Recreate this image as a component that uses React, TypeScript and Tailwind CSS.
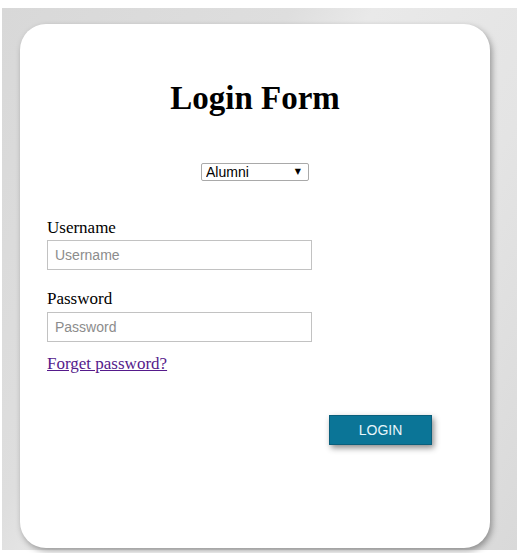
import React, { useState } from "react";

const App: React.FC = () => {
  const [role, setRole] = useState("Alumni");

  return (
    <div className="w-[521px] h-[553px] bg-white pt-[8px] pl-[2px]">
      <div className="w-[515px] h-[542px] pt-[16px] pl-[18px] bg-[linear-gradient(120deg,#d8d8d8_0%,#dedede_35%,#e9e9e9_45%,#e4e4e4_70%,#d9d9d9_100%)]">
        <div className="w-[470px] h-[524px] rounded-[26px] bg-white shadow-[2px_3px_6px_rgba(0,0,0,0.35)] pt-[54px] px-[27px] font-['Liberation_Serif',serif] text-black">
          <h1 className="text-center text-[33px] font-bold leading-[40px]">Login Form</h1>

          <div className="flex justify-center mt-[45px]">
            <div className="relative w-[108px] h-[18px]">
              <select
                value={role}
                onChange={(e) => setRole(e.target.value)}
                className="block appearance-none w-full h-[18px] border border-[#a9a9a9] rounded-[2px] bg-white pl-[4px] text-[14px] leading-[16px] font-['Liberation_Sans',sans-serif] text-black"
              >
                <option>Alumni</option>
                <option>Student</option>
                <option>Staff</option>
              </select>
              <span className="absolute right-[8px] top-[4px] text-[8px] leading-[10px] pointer-events-none font-['DejaVu_Sans',sans-serif]">▼</span>
            </div>
          </div>

          <div className="mt-[37px]">
            <label className="block text-[17px] leading-[20px]">Username</label>
            <input
              placeholder="Username"
              className="block mt-[2px] w-[265px] h-[30px] border border-[#c2c2c2] px-[7px] text-[14px] font-['Liberation_Sans',sans-serif] placeholder:text-[#8c8c8c] outline-none"
            />
          </div>

          <div className="mt-[19px]">
            <label className="block text-[17px] leading-[20px]">Password</label>
            <input
              type="password"
              placeholder="Password"
              className="block mt-[3px] w-[265px] h-[30px] border border-[#c2c2c2] px-[7px] text-[14px] font-['Liberation_Sans',sans-serif] placeholder:text-[#8c8c8c] outline-none"
            />
          </div>

          <a href="#" className="block w-fit mt-[12px] text-[17px] leading-[20px] text-[#551a8b] underline">
            Forget password?
          </a>

          <div className="flex justify-end pr-[31px] mt-[41px]">
            <button className="w-[103px] h-[30px] bg-[#0b7597] text-[#e8f6fb] text-[14px] font-['Liberation_Sans',sans-serif] border border-[#0a5f7c] shadow-[2px_3px_6px_rgba(0,0,0,0.45)]">
              LOGIN
            </button>
          </div>
        </div>
      </div>
    </div>
  );
};

export default App;
